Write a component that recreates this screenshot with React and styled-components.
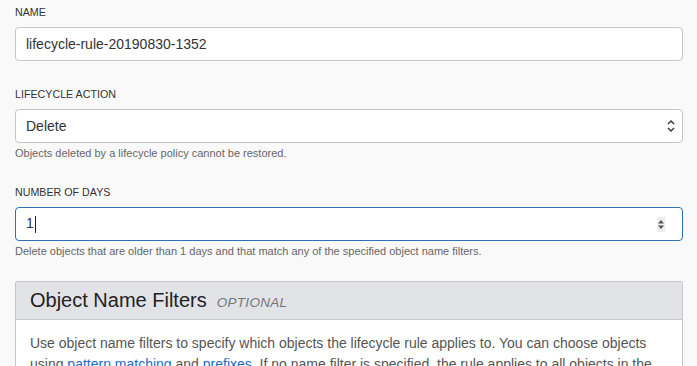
import React from 'react';
import styled, { createGlobalStyle } from 'styled-components';

const Global = createGlobalStyle`
  body {
    margin: 0;
    background: #f9f9f9;
    font-family: "Liberation Sans", Arial, sans-serif;
    color: #333;
  }
`;

const Page = styled.div`
  padding: 5px 14px 0 15px;
  width: 668px;
`;

const Field = styled.div`
  display: flex;
  flex-direction: column;
  margin-bottom: ${p => p.gap || 0}px;
`;

const Label = styled.div`
  font-size: 10.7px;
  line-height: 14px;
  color: #333;
  margin-bottom: 8px;
`;

const Box = styled.div`
  height: 34px;
  box-sizing: border-box;
  border: 1px solid ${p => (p.focus ? '#3071b5' : '#c6c6c6')};
  border-radius: 4px;
  background: #fff;
  display: flex;
  align-items: center;
  padding: 0 ${p => p.padRight || 12}px 0 10px;
  font-size: 14px;
  color: #333;
`;

const Value = styled.span`
  flex: 1;
`;

const Caret = styled.span`
  display: inline-block;
  width: 1px;
  height: 17px;
  background: #222;
  vertical-align: middle;
  margin-left: 1px;
`;

const Spinner = styled.div`
  width: 8px;
  height: 15px;
  background: #ededed;
  display: flex;
  align-items: center;
  justify-content: center;
  margin-right: 5px;
`;

const Help = styled.div`
  font-size: 11px;
  line-height: 14px;
  color: #666;
  margin-top: 3px;
`;

const Panel = styled.div`
  border: 1px solid #c6c6c6;
  border-radius: 2px;
  background: #fff;
  margin-top: 23px;
`;

const PanelHead = styled.div`
  background: #e1e3e6;
  border-bottom: 1px solid #c6c6c6;
  height: 37px;
  display: flex;
  align-items: center;
  padding: 0 14px;
  gap: 10px;
`;

const Title = styled.span`
  font-size: 20px;
  color: #222;
`;

const Optional = styled.span`
  font-size: 13.5px;
  font-style: italic;
  color: #777;
  letter-spacing: 0.3px;
  margin-top: 3px;
`;

const PanelBody = styled.div`
  padding: 13px 14px;
  font-size: 14px;
  line-height: 21px;
  color: #555;
`;

const Link = styled.a`
  color: #1e6bc6;
  text-decoration: none;
`;

const App = () => (
  <>
    <Global />
    <Page>
      <Field gap={26}>
        <Label>NAME</Label>
        <Box>
          <Value>lifecycle-rule-20190830-1352</Value>
        </Box>
      </Field>
      <Field gap={25}>
        <Label>LIFECYCLE ACTION</Label>
        <Box padRight={7}>
          <Value>Delete</Value>
          <svg width="8" height="14" viewBox="0 0 8 14">
            <path d="M1 5 L4 2 L7 5 M1 9 L4 12 L7 9" fill="none" stroke="#333" strokeWidth="1.4" />
          </svg>
        </Box>
        <Help>Objects deleted by a lifecycle policy cannot be restored.</Help>
      </Field>
      <Field>
        <Label>NUMBER OF DAYS</Label>
        <Box focus>
          <Value>
            1<Caret />
          </Value>
          <Spinner>
            <svg width="6" height="11" viewBox="0 0 6 11">
              <path d="M0 4.5 L3 1 L6 4.5 Z M0 6.5 L3 10 L6 6.5 Z" fill="#555" />
            </svg>
          </Spinner>
        </Box>
        <Help>Delete objects that are older than 1 days and that match any of the specified object name filters.</Help>
      </Field>
      <Panel>
        <PanelHead>
          <Title>Object Name Filters</Title>
          <Optional>OPTIONAL</Optional>
        </PanelHead>
        <PanelBody>
          Use object name filters to specify which objects the lifecycle rule applies to. You can choose objects
          using <Link href="#">pattern matching</Link> and <Link href="#">prefixes</Link>. If no name filter is
          specified, the rule applies to all objects in the bucket.
        </PanelBody>
      </Panel>
    </Page>
  </>
);

export default App;
